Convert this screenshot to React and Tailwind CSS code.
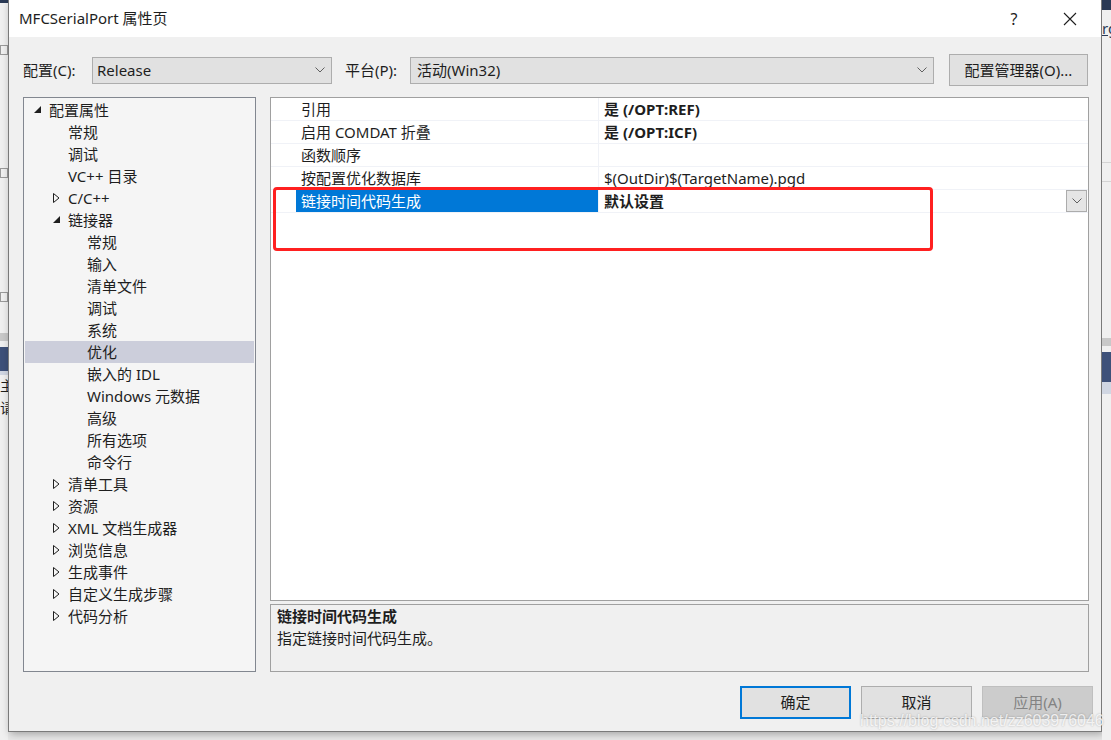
import React from 'react'

const font = "font-['Noto_Sans','Noto_Sans_CJK_SC',sans-serif]"

function Chevron({ className = '' }) {
  return (
    <svg width="10" height="6" viewBox="0 0 10 6" className={className}>
      <path d="M0.5 0.5 L5 5 L9.5 0.5" fill="none" stroke="#606060" strokeWidth="1" />
    </svg>
  )
}

function Expanded() {
  return (
    <svg width="8" height="8" viewBox="0 0 8 8">
      <polygon points="7,0 7,7 0,7" fill="#1e1e1e" />
    </svg>
  )
}

function Collapsed() {
  return (
    <svg width="7" height="10" viewBox="0 0 7 10">
      <polygon points="0.5,0.5 6,5 0.5,9.5" fill="none" stroke="#1e1e1e" strokeWidth="1" />
    </svg>
  )
}

const tree = [
  { label: '配置属性', level: 0, state: 'open' },
  { label: '常规', level: 1 },
  { label: '调试', level: 1 },
  { label: 'VC++ 目录', level: 1 },
  { label: 'C/C++', level: 1, state: 'closed' },
  { label: '链接器', level: 1, state: 'open' },
  { label: '常规', level: 2 },
  { label: '输入', level: 2 },
  { label: '清单文件', level: 2 },
  { label: '调试', level: 2 },
  { label: '系统', level: 2 },
  { label: '优化', level: 2, selected: true },
  { label: '嵌入的 IDL', level: 2 },
  { label: 'Windows 元数据', level: 2 },
  { label: '高级', level: 2 },
  { label: '所有选项', level: 2 },
  { label: '命令行', level: 2 },
  { label: '清单工具', level: 1, state: 'closed' },
  { label: '资源', level: 1, state: 'closed' },
  { label: 'XML 文档生成器', level: 1, state: 'closed' },
  { label: '浏览信息', level: 1, state: 'closed' },
  { label: '生成事件', level: 1, state: 'closed' },
  { label: '自定义生成步骤', level: 1, state: 'closed' },
  { label: '代码分析', level: 1, state: 'closed' },
]

const indents = ['pl-[9px]', 'pl-[28px]', 'pl-[47px]']

const props = [
  { name: '引用', value: '是 (/OPT:REF)', bold: true },
  { name: '启用 COMDAT 折叠', value: '是 (/OPT:ICF)', bold: true },
  { name: '函数顺序', value: '' },
  { name: '按配置优化数据库', value: '$(OutDir)$(TargetName).pgd' },
  { name: '链接时间代码生成', value: '默认设置', bold: true, selected: true },
]

function TreeRow({ item }) {
  return (
    <div className={`flex items-center h-[22px] ${indents[item.level]} ${item.selected ? 'bg-[#cccedb]' : ''}`}>
      <div className="w-[15px] shrink-0 flex items-center">
        {item.state === 'open' && <Expanded />}
        {item.state === 'closed' && <Collapsed />}
      </div>
      <span className="whitespace-nowrap">{item.label}</span>
    </div>
  )
}

function PropRow({ p }) {
  return (
    <div className="flex h-[23px] border-b border-[#f0f2f7]">
      <div className="w-[25px] shrink-0 bg-white" />
      <div className={`w-[303px] shrink-0 pl-[5px] flex items-center border-r border-[#f0f2f7] ${p.selected ? 'bg-[#0078d7] text-white' : ''}`}>
        {p.name}
      </div>
      <div className={`flex-1 pl-[5px] flex items-center justify-between ${p.bold ? 'font-bold' : ''}`}>
        <span>{p.value}</span>
        {p.selected && (
          <div className="w-[21px] h-[22px] bg-[#e5e5e5] border border-[#acacac] flex items-center justify-center mr-[1px]">
            <Chevron />
          </div>
        )}
      </div>
    </div>
  )
}

export default function App() {
  return (
    <div className={`relative w-[1111px] h-[740px] overflow-hidden bg-[#e8e8e8] flex text-[15px] text-[#1e1e1e] ${font}`}>
      {/* left backdrop strip */}
      <div className="w-[8px] shrink-0 flex flex-col bg-[#f0f0f0] overflow-hidden">
        <div className="h-[3px] bg-[#2b3a55]" />
        <div className="h-[42px]" />
        <div className="w-[8px] h-[10px] border border-[#9a9a9a]" />
        <div className="h-[113px]" />
        <div className="w-[8px] h-[10px] border border-[#9a9a9a]" />
        <div className="h-[114px]" />
        <div className="w-[8px] h-[10px] border border-[#9a9a9a]" />
        <div className="h-[31px]" />
        <div className="h-[8px] bg-[#c8c8c8]" />
        <div className="h-[6px]" />
        <div className="h-[24px] bg-[#3e5179]" />
        <div className="h-[4px] bg-[#d0d6e2]" />
        <div className="w-[8px] h-[22px] overflow-hidden text-[14px] leading-[22px]">主</div>
        <div className="w-[8px] h-[22px] overflow-hidden text-[14px] leading-[22px]">请</div>
      </div>

      {/* dialog */}
      <div className="w-[1094px] h-[732px] shrink-0 bg-[#f0f0f0] border-l border-b border-r border-[#7a7a7a] shadow-[2px_2px_8px_rgba(0,0,0,0.3)] flex flex-col">
        <div className="h-[37px] bg-white flex items-center justify-between pl-[10px]">
          <span>MFCSerialPort 属性页</span>
          <div className="flex items-center">
            <span className="w-[56px] text-center text-[16px]">?</span>
            <div className="w-[56px] flex justify-center">
              <svg width="14" height="14" viewBox="0 0 14 14">
                <path d="M1 1 L13 13 M13 1 L1 13" stroke="#1e1e1e" strokeWidth="1.1" />
              </svg>
            </div>
            <div className="w-[3px]" />
          </div>
        </div>

        <div className="flex items-center h-[32px] mt-[17px] pl-[14px]">
          <span className="w-[69px]">配置(C):</span>
          <div className="w-[240px] h-[27px] bg-[#e1e1e1] border border-[#adadad] flex items-center justify-between pl-[4px] pr-[6px]">
            <span>Release</span>
            <Chevron />
          </div>
          <span className="ml-[13px] w-[65px]">平台(P):</span>
          <div className="w-[524px] h-[27px] bg-[#e1e1e1] border border-[#adadad] flex items-center justify-between pl-[6px] pr-[6px]">
            <span>活动(Win32)</span>
            <Chevron />
          </div>
          <div className="ml-[15px] w-[139px] h-[32px] bg-[#e1e1e1] border border-[#adadad] flex items-center justify-center">
            配置管理器(O)...
          </div>
        </div>

        <div className="flex mt-[11px] pl-[14px]">
          <div className="w-[233px] h-[575px] bg-[#f5f5f5] border border-[#828790] pt-[1px] px-[1px]">
            {tree.map((item, i) => (
              <TreeRow key={i} item={item} />
            ))}
          </div>
          <div className="ml-[14px] w-[819px] flex flex-col">
            <div className="h-[504px] bg-white border border-[#a0a0a0]">
              {props.map((p, i) => (
                <PropRow key={i} p={p} />
              ))}
            </div>
            <div className="mt-[3px] h-[68px] border border-[#a0a0a0] px-[6px] leading-[22px]">
              <div className="font-bold">链接时间代码生成</div>
              <div>指定链接时间代码生成。</div>
            </div>
          </div>
        </div>

        <div className="flex justify-end gap-[10px] mt-[14px] pr-[8px]">
          <div className="w-[111px] h-[33px] bg-[#e1e1e1] border-2 border-[#0078d7] flex items-center justify-center">确定</div>
          <div className="w-[111px] h-[33px] bg-[#e1e1e1] border border-[#adadad] flex items-center justify-center">取消</div>
          <div className="w-[111px] h-[33px] bg-[#cccccc] border border-[#bfbfbf] text-[#838383] flex items-center justify-center">应用(A)</div>
        </div>
      </div>

      {/* right backdrop strip */}
      <div className="flex-1 flex flex-col bg-[#f0f0f0] overflow-hidden">
        <div className="h-[10px] bg-[#2b3a55]" />
        <div className="h-[36px] text-[15px] text-[#2b3a55] underline leading-[36px] whitespace-nowrap">rg</div>
        <div className="h-[116px]" />
        <div className="h-[1px] bg-[#d4d4d4]" />
        <div className="h-[18px]" />
        <div className="h-[1px] bg-[#d4d4d4]" />
        <div className="h-[156px]" />
        <div className="h-[8px] bg-[#c8c8c8]" />
        <div className="h-[6px]" />
        <div className="h-[30px] bg-[#3e5179]" />
        <div className="h-[12px] bg-[#d0d6e2]" />
      </div>

      {/* annotation */}
      <div className="absolute left-[273px] top-[187px] w-[660px] h-[64px] border-[3px] border-[#ff2020] rounded-[4px]" />

      {/* watermark */}
      <div className="absolute left-[860px] top-[709px] text-[16px] text-white/80 font-['Liberation_Sans',sans-serif] [text-shadow:0_0_2px_rgba(0,0,0,0.3)] whitespace-nowrap">
        https://blog.csdn.net/zz603976046
      </div>
    </div>
  )
}
